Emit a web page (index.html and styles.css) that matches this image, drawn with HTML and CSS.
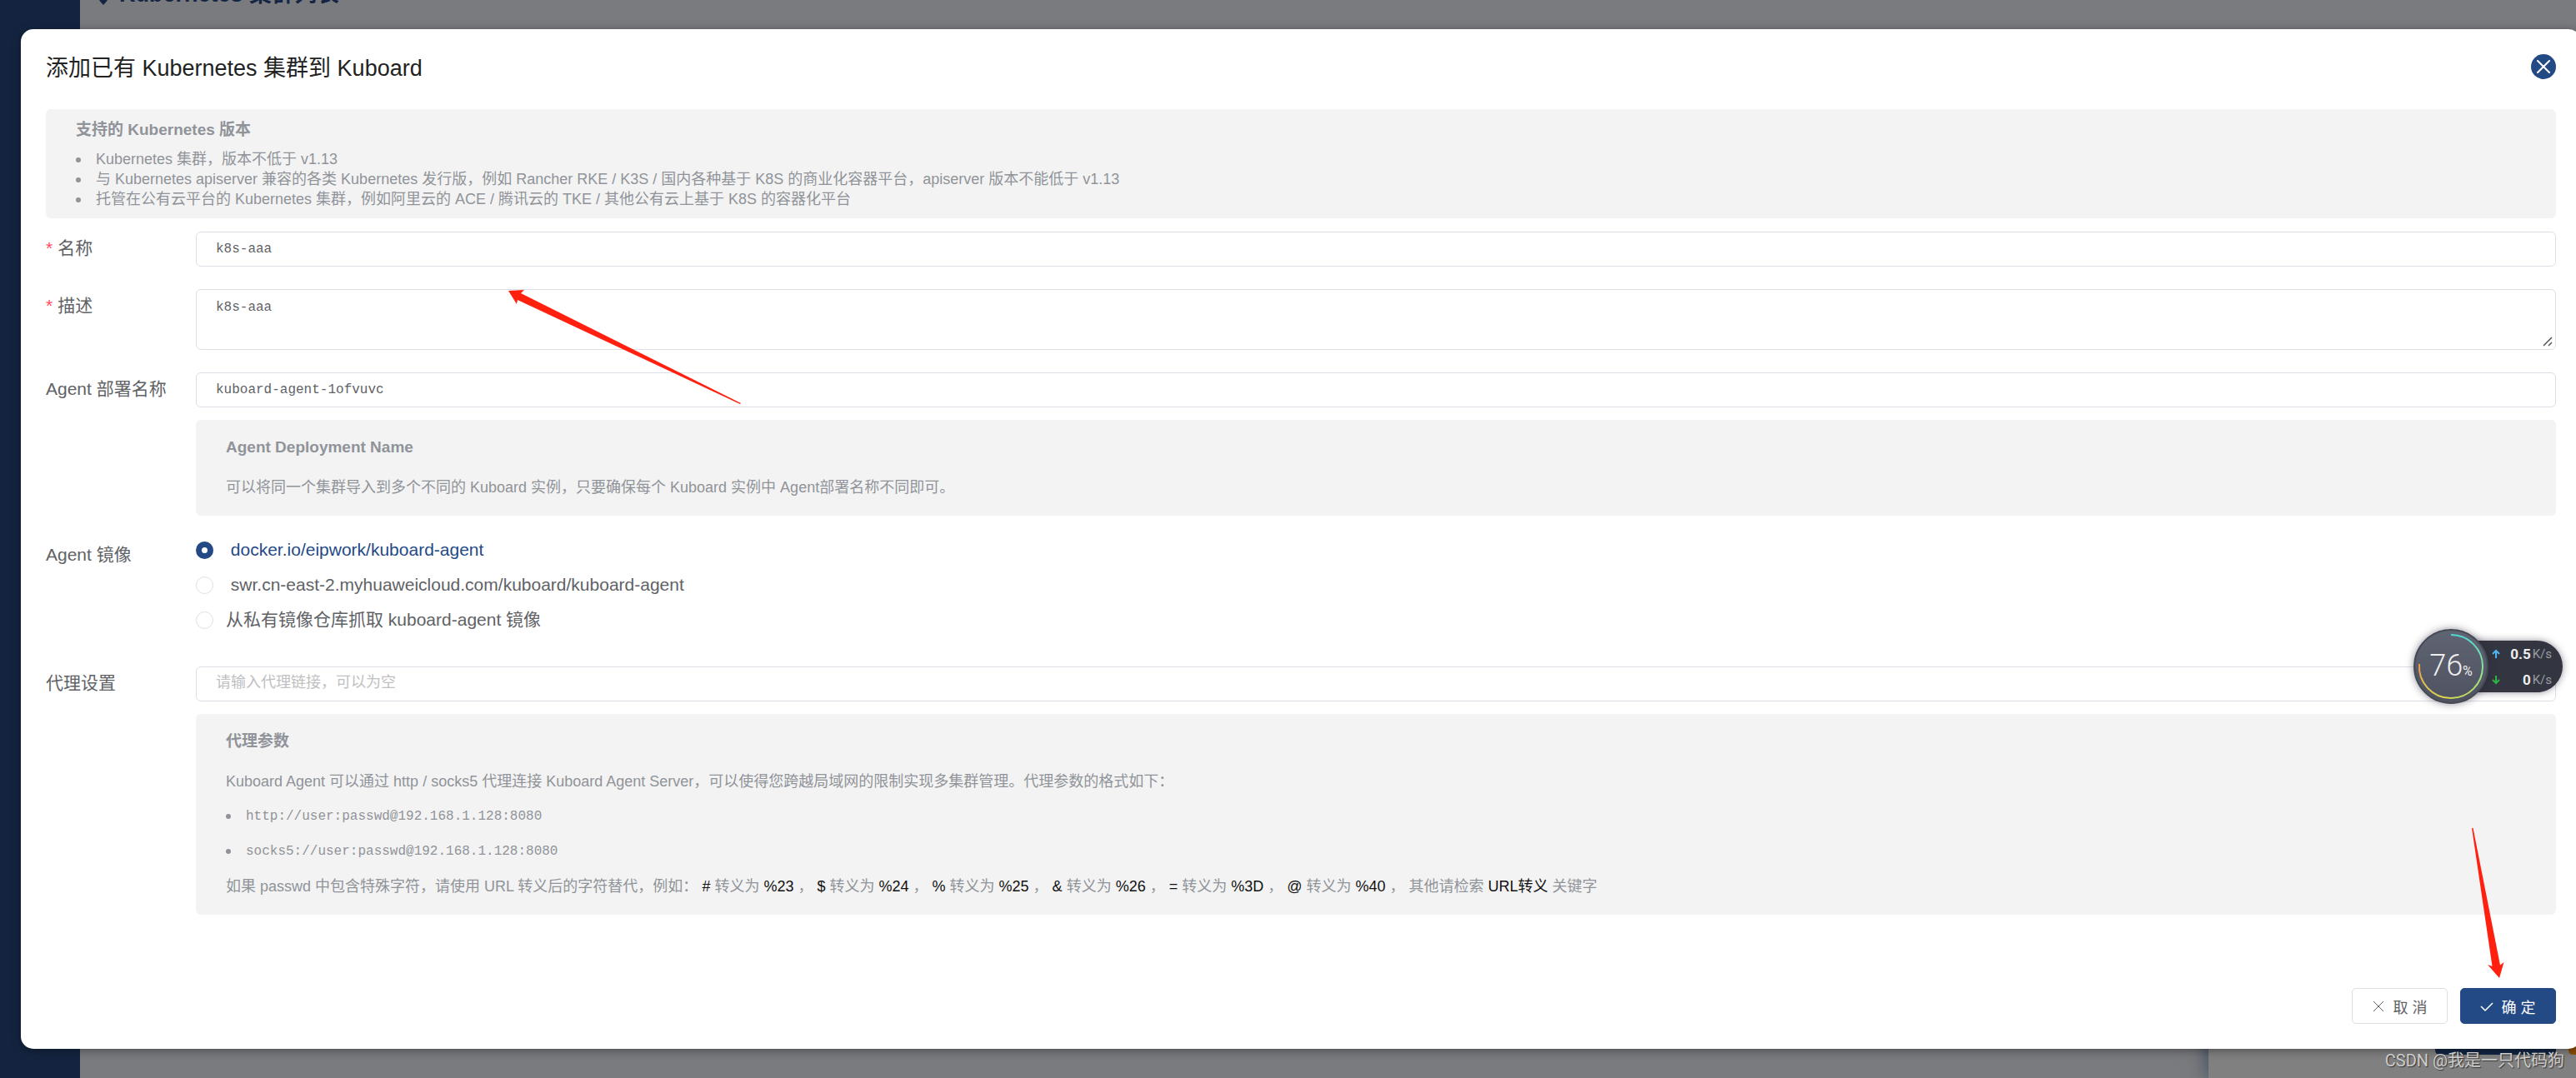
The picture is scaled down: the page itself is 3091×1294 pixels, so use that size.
FILE: index.html
```html
<!DOCTYPE html>
<html lang="zh-CN">
<head>
<meta charset="utf-8">
<title>Kuboard</title>
<link rel="stylesheet" href="styles.css">
</head>
<body>
<div class="screen">
  <div class="backdrop">
    <aside class="sidebar"></aside>
    <main class="page">
      <h1 class="page-title">
        <svg class="pin" viewBox="0 0 24 32" width="24" height="32" aria-hidden="true"><path d="M12 1a10 10 0 0 0-10 10c0 8 10 18 10 18s10-10 10-18A10 10 0 0 0 12 1zm0 14a4 4 0 1 1 0-8 4 4 0 0 1 0 8z" fill="#142544"/></svg>
        Kubernetes 集群列表
      </h1>
    </main>
    <section class="drawer">
      <span class="drawer-action"></span>
      <span class="drawer-action drawer-action-warning"></span>
    </section>
  </div>

  <form class="dialog">
    <header class="dialog-header">
      <h2 class="dialog-title">添加已有 Kubernetes 集群到 Kuboard</h2>
      <button class="close" type="button" aria-label="关闭">
        <svg viewBox="0 0 30 30" width="30" height="30"><path d="M8 8l14 14M22 8L8 22" stroke="#fff" stroke-width="2" stroke-linecap="round"/></svg>
      </button>
    </header>

    <section class="notice">
      <h3 class="tip-title">支持的 Kubernetes 版本</h3>
      <ul class="bullets">
        <li>Kubernetes 集群，版本不低于 v1.13</li>
        <li>与 Kubernetes apiserver 兼容的各类 Kubernetes 发行版，例如 Rancher RKE / K3S / 国内各种基于 K8S 的商业化容器平台，apiserver 版本不能低于 v1.13</li>
        <li>托管在公有云平台的 Kubernetes 集群，例如阿里云的 ACE / 腾讯云的 TKE / 其他公有云上基于 K8S 的容器化平台</li>
      </ul>
    </section>

    <div class="fields">
      <div class="row">
        <label class="label required" for="name">名称</label>
        <div class="control"><input class="input" id="name" type="text" value="k8s-aaa"></div>
      </div>
      <div class="row">
        <label class="label required" for="desc">描述</label>
        <div class="control">
          <textarea class="input area" id="desc">k8s-aaa</textarea>
          <svg class="grip" viewBox="0 0 12 12" width="12" height="12" aria-hidden="true"><path d="M1 11L11 1M7 11l4-4" stroke="#555" stroke-width="1.500" fill="none"/></svg>
        </div>
      </div>
      <div class="row">
        <label class="label" for="agent">Agent 部署名称</label>
        <div class="control">
          <input class="input" id="agent" type="text" value="kuboard-agent-1ofvuvc">
          <div class="tip">
            <h3 class="tip-title">Agent Deployment Name</h3>
            <p>可以将同一个集群导入到多个不同的 Kuboard 实例，只要确保每个 Kuboard 实例中 Agent部署名称不同即可。</p>
          </div>
        </div>
      </div>
      <div class="row">
        <span class="label" id="image-label">Agent 镜像</span>
        <div class="control radios" role="radiogroup" aria-labelledby="image-label">
          <label class="radio"><input type="radio" name="image" checked><span>&nbsp;docker.io/eipwork/kuboard-agent</span></label>
          <label class="radio"><input type="radio" name="image"><span>&nbsp;swr.cn-east-2.myhuaweicloud.com/kuboard/kuboard-agent</span></label>
          <label class="radio"><input type="radio" name="image"><span>从私有镜像仓库抓取 kuboard-agent 镜像</span></label>
        </div>
      </div>
      <div class="row">
        <label class="label" for="proxy">代理设置</label>
        <div class="control">
          <input class="input" id="proxy" type="text" placeholder="请输入代理链接，可以为空">
          <div class="tip">
            <h3 class="tip-title">代理参数</h3>
            <p>Kuboard Agent 可以通过 http / socks5 代理连接 Kuboard Agent Server，可以使得您跨越局域网的限制实现多集群管理。代理参数的格式如下：</p>
            <ul class="bullets code">
              <li>http://user:passwd@192.168.1.128:8080</li>
              <li>socks5://user:passwd@192.168.1.128:8080</li>
            </ul>
            <p>如果 passwd 中包含特殊字符，请使用 URL 转义后的字符替代，例如： <b>#</b> 转义为 <b>%23</b> ， <b>$</b> 转义为 <b>%24</b> ， <b>%</b> 转义为 <b>%25</b> ， <b>&amp;</b> 转义为 <b>%26</b> ， <b>=</b> 转义为 <b>%3D</b> ， <b>@</b> 转义为 <b>%40</b> ， 其他请检索 <b>URL转义</b> 关键字</p>
          </div>
        </div>
      </div>
    </div>

    <footer class="dialog-footer">
      <button class="btn" type="button"><svg viewBox="0 0 16 16" width="16" height="16" aria-hidden="true"><path d="M2 2l12 12M14 2L2 14" stroke="currentColor" fill="none"/></svg>取 消</button>
      <button class="btn btn-primary" type="submit"><svg viewBox="0 0 16 16" width="16" height="16" aria-hidden="true"><path d="M1 8l5 5L15 4" stroke="currentColor" stroke-width="1.500" fill="none"/></svg>确 定</button>
    </footer>
  </form>

  <div class="meter">
    <div class="dial">
      <svg class="ring" viewBox="0 0 90 90" width="90" height="90" fill="none" stroke-width="2" aria-hidden="true">
        <defs>
          <linearGradient id="g1" x1="0" y1="0" x2="0" y2="1"><stop offset="0" stop-color="#4fd6d2"/><stop offset="1" stop-color="#86e39a"/></linearGradient>
          <linearGradient id="g2" x1="0" y1="0" x2="0" y2="1"><stop offset="0" stop-color="#86e39a"/><stop offset="1" stop-color="#c9d95a"/></linearGradient>
          <linearGradient id="g3" x1="0" y1="0" x2="0" y2="1"><stop offset="0" stop-color="#f0954a"/><stop offset="1" stop-color="#dcd84e"/></linearGradient>
        </defs>
        <path d="M45 7A38 38 0 0 1 83 45" stroke="url(#g1)"/>
        <path d="M83 45A38 38 0 0 1 45 83" stroke="url(#g2)"/>
        <path d="M45 83A38 38 0 0 1 7 42" stroke="url(#g3)"/>
      </svg>
      <span class="dial-value">76</span><span class="dial-unit">%</span>
    </div>
    <div class="speeds">
      <div class="speed"><svg viewBox="0 0 12 12" width="12" height="12" aria-hidden="true"><path d="M6 11V2M2 6l4-4 4 4" stroke="#4fb4f0" stroke-width="2" fill="none"/></svg><strong>0.5</strong><span>K/s</span></div>
      <div class="speed"><svg viewBox="0 0 12 12" width="12" height="12" aria-hidden="true"><path d="M6 1v9M2 6l4 4 4-4" stroke="#2fb344" stroke-width="2" fill="none"/></svg><strong>0</strong><span>K/s</span></div>
    </div>
  </div>

  <svg class="arrow arrow-name" viewBox="0 0 280 138" width="280" height="138" aria-hidden="true"><path d="M0 1L19 0L15 4L279 136L278 137L11 12L10 17z" fill="#ff2010"/></svg>
  <svg class="arrow arrow-confirm" viewBox="0 0 40 182" width="40" height="182" aria-hidden="true"><path d="M1 1h1.500L35 165.500L39.500 162L34 181L20 165L25.500 167z" fill="#ff2010"/></svg>
  <p class="watermark">CSDN @我是一只代码狗</p>
</div>
</body>
</html>
```
FILE: styles.css
```css
* { box-sizing: border-box; }
body, h1, h2, h3, p, ul { margin: 0; padding: 0; }
body, button {
  font-family: "Liberation Sans", "Noto Sans CJK SC", sans-serif;
}
body { color: #606266; }
svg { flex: none; overflow: visible; }

.screen {
  position: relative;
  min-height: 100vh;
  padding: 35px 0;
  overflow: hidden;
}

/* dimmed page behind the dialog */
.backdrop {
  position: absolute;
  inset: 0;
  display: flex;
  background: #7a7b7e;
}
.sidebar { width: 96px; background: #142440; }
.page { flex: 1; padding: 0 16px; }
.page-title {
  display: flex;
  align-items: center;
  gap: 7px;
  margin-top: -27px;
  font-size: 27px;
  line-height: 40px;
  color: #142544;
}
.drawer {
  display: flex;
  align-items: flex-end;
  align-self: flex-end;
  gap: 15px;
  width: 441px;
  height: 50%;
  padding: 0 0 28px 272px;
  background: #808080;
  box-shadow: 0 0 24px #33445a;
}
.drawer-action {
  flex: none;
  width: 145px;
  height: 43px;
  border-radius: 5px;
  background: #122543;
}
.drawer-action-warning { background: #8a4b06; }

.dialog {
  position: relative;
  margin: 0 -6px 0 25px;
  padding: 30px;
  border-radius: 15px;
  background: #fff;
  box-shadow: 0 2px 12px rgba(0, 0, 0, .4);
}
.dialog-header {
  display: flex;
  justify-content: space-between;
  margin-bottom: 32px;
}
.dialog-title {
  font-size: 27px;
  font-weight: 400;
  line-height: 34px;
  color: #222;
}
.close {
  width: 30px;
  height: 30px;
  padding: 0;
  border: 0;
  border-radius: 50%;
  background: #244a86;
}
.close svg { display: block; }

.notice, .tip {
  border-radius: 6px;
  background: #f3f3f3;
  font-size: 18px;
  color: #909399;
}
.notice { padding: 13px 36px 11px; line-height: 24px; }
.notice .tip-title { margin-bottom: 11px; }
.tip { margin-top: 15px; padding: 21px 36px 13px; line-height: 42px; }
.tip .tip-title { margin-bottom: 15px; }
.tip-title { font-size: 19px; font-weight: 700; line-height: 24px; }
.tip b { font-weight: 400; color: #111; }
.bullets { list-style: none; }
.bullets li::before {
  content: "";
  display: inline-block;
  width: 6px;
  height: 6px;
  margin-right: 18px;
  border-radius: 50%;
  background: #909399;
  vertical-align: middle;
}
.code { font-family: "Liberation Mono", monospace; font-size: 16px; }

.fields { display: grid; gap: 27px; margin-top: 16px; }
.row { display: flex; align-items: flex-start; }
.label { flex: none; width: 180px; font-size: 21px; line-height: 39px; }
.required::before { content: "*"; margin-right: 6px; color: #ff4d5e; }
.control { position: relative; flex: 1; min-width: 0; }
.input {
  display: block;
  width: 100%;
  height: 42px;
  padding: 0 23px;
  border: 1px solid #dcdfe6;
  border-radius: 6px;
  background: #fff;
  font-family: "Liberation Mono", "Noto Sans CJK SC", monospace;
  font-size: 16px;
  color: #606266;
}
.input::placeholder {
  font-family: "Noto Sans CJK SC", sans-serif;
  font-size: 18px;
  color: #c0c0c0;
}
.area { height: 73px; padding-top: 8px; line-height: 27px; resize: none; }
.grip { position: absolute; right: 4px; bottom: 4px; }

.radios { display: grid; gap: 14px; padding-bottom: 15px; }
.radio {
  display: flex;
  align-items: center;
  gap: 15px;
  font-size: 21px;
  line-height: 28px;
}
.radio input {
  appearance: none;
  width: 21px;
  height: 21px;
  margin: 0;
  border: 1px solid #dcdfe6;
  border-radius: 50%;
}
.radio input:checked { border: 7px solid #244a86; }
.radio input:checked + span { color: #244a86; }

.dialog-footer {
  display: flex;
  justify-content: flex-end;
  gap: 15px;
  margin-top: 88px;
}
.btn {
  display: flex;
  align-items: center;
  justify-content: center;
  gap: 9px;
  width: 115px;
  height: 43px;
  border: 1px solid #dcdfe6;
  border-radius: 5px;
  background: #fff;
  font-size: 18px;
  color: #606266;
}
.btn-primary { border-color: #244a86; background: #244a86; color: #fff; }

/* floating system monitor */
.meter {
  position: absolute;
  top: 755px;
  right: 16px;
  display: flex;
  align-items: center;
  font-family: Roboto, sans-serif;
}
.dial {
  position: relative;
  display: flex;
  align-items: baseline;
  justify-content: center;
  width: 90px;
  height: 90px;
  border: 2px solid #444954;
  border-radius: 50%;
  background: linear-gradient(#5f6472, #4f5361);
  box-shadow: 0 0 10px rgba(40, 30, 50, .5);
  line-height: 84px;
  color: #eee;
  z-index: 1;
}
.ring { position: absolute; top: -2px; left: -2px; }
.dial-value { font-size: 36px; font-weight: 300; }
.dial-unit { font-size: 16px; }
.speeds {
  width: 110px;
  margin-left: -21px;
  padding: 0 13px 0 24px;
  border-radius: 0 32px 32px 0;
  background: #333640;
  box-shadow: 0 0 8px rgba(40, 30, 50, .5);
}
.speed {
  display: flex;
  align-items: center;
  gap: 2px;
  height: 31px;
  font-size: 15px;
  color: #9a9ca2;
}
.speed strong { flex: 1; font-size: 17px; text-align: right; color: #eee; }

/* annotation arrows */
.arrow { position: absolute; }
.arrow-name { top: 348px; left: 610px; }
.arrow-confirm { top: 993px; right: 86px; }

.watermark {
  position: absolute;
  right: 14px;
  bottom: 6px;
  font-family: Roboto, "Noto Sans CJK SC", sans-serif;
  font-size: 20px;
  line-height: 30px;
  color: #ccc;
  text-shadow: 1px 1px 1px #333;
}
```
